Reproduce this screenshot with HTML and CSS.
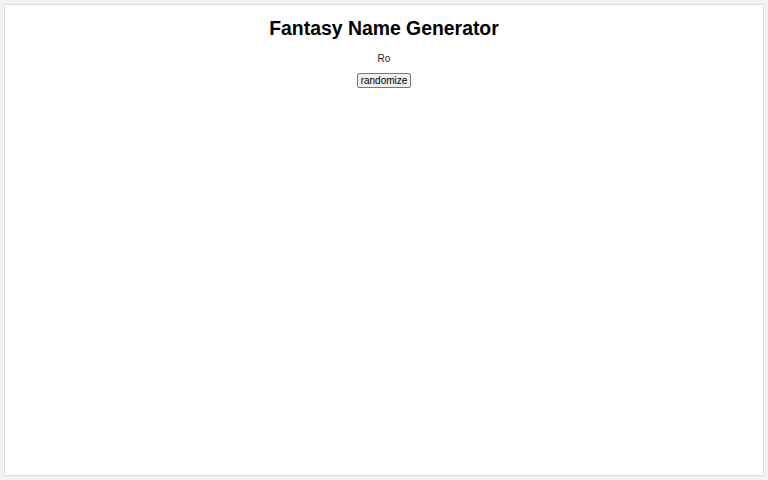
FILE: index.html
```html
<!DOCTYPE html>
<html lang="en">
<head>
    <meta charset="UTF-8">
    <meta name="viewport" content="width=device-width, initial-scale=1.0">
    <title>Fantasy Name Generator</title>
    <link rel="stylesheet" href="styles.css">
</head>
<body>

    <div class="page">
        <h1 class="title">Fantasy Name Generator</h1>
        <div class="name">Ro</div>
        <button class="btn-randomize">randomize</button>
    </div>

</body>
</html>
```

FILE: styles.css
```css
* {
    margin: 0;
    padding: 0;
    box-sizing: border-box;
}

body {
    font-family: 'Liberation Sans', Arial, sans-serif;
    background-color: #f2f2f2;
    color: #000;
    height: 100vh;
    padding: 4px;
}

.page {
    height: 100%;
    background: #fff;
    border: 1px solid #dcdcdc;
    display: flex;
    flex-direction: column;
    align-items: center;
    padding-top: 12px;
}

.title {
    font-size: 19.4px;
    font-weight: bold;
    line-height: 22px;
}

.name {
    font-size: 10px;
    color: #222;
    margin-top: 14px;
    line-height: 12px;
}

.btn-randomize {
    font-family: 'Liberation Sans', Arial, sans-serif;
    font-size: 10px;
    line-height: 13px;
    margin-top: 8px;
    padding: 0 3px;
    background: #efefef;
    border: 1px solid #767676;
    border-radius: 2px;
    color: #000;
}
```
